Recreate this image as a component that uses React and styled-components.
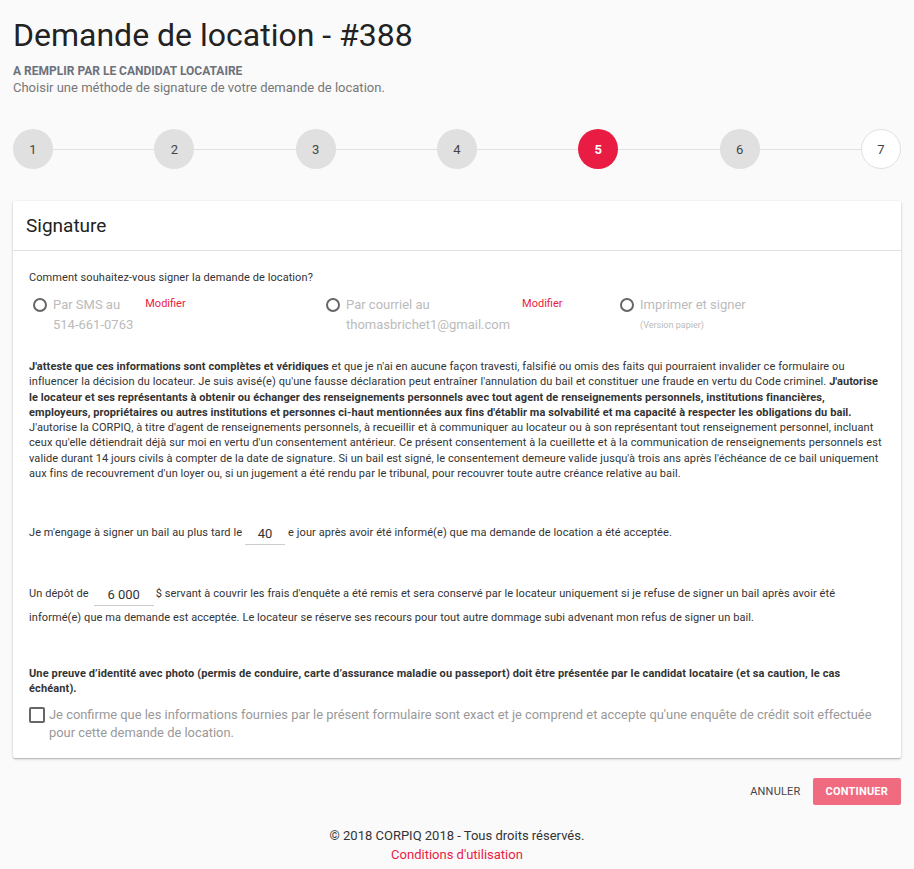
import React from "react";
import styled, { createGlobalStyle } from "styled-components";

const Global = createGlobalStyle`
  html, body { margin: 0; padding: 0; background: #fafafa; }
  body { font-family: Roboto, "Noto Sans", Arial, sans-serif; color: #333; }
  * { box-sizing: border-box; }
`;

const Page = styled.div`
  padding: 13px 13px 0 13px;
  min-height: 869px;
`;

const Title = styled.h1`
  margin: 4px 0 0 0;
  font-size: 32px;
  font-weight: 400;
  line-height: 36px;
  color: #222;
`;

const Kicker = styled.div`
  margin-top: 11px;
  font-size: 12px;
  font-weight: 700;
  line-height: 14px;
  color: #6c717b;
`;

const Lead = styled.div`
  margin-top: 1px;
  font-size: 13px;
  line-height: 17px;
  color: #777;
`;

const Stepper = styled.div`
  margin-top: 33px;
  display: flex;
  align-items: center;
`;

const Step = styled.div`
  flex: 0 0 40px;
  width: 40px;
  height: 40px;
  border-radius: 50%;
  display: flex;
  align-items: center;
  justify-content: center;
  font-size: 13px;
  font-weight: ${(p) => (p.$active ? 700 : 400)};
  color: ${(p) => (p.$active ? "#fff" : "#444")};
  background: ${(p) => (p.$active ? "#e91c43" : p.$future ? "#fff" : "#e0e0e0")};
  border: ${(p) => (p.$future ? "1px solid #e0e0e0" : "none")};
`;

const Connector = styled.div`
  flex: 1;
  height: 1px;
  background: #e0e0e0;
`;

const Card = styled.section`
  margin-top: 32px;
  background: #fff;
  box-shadow: 0 1px 3px rgba(0, 0, 0, 0.2), 0 1px 1px rgba(0, 0, 0, 0.14);
  border-radius: 2px;
`;

const CardHeader = styled.div`
  height: 50px;
  padding: 0 13px;
  display: flex;
  align-items: center;
  font-size: 19px;
  color: #222;
  border-bottom: 1px solid #e0e0e0;
`;

const CardBody = styled.div`
  padding: 19px 16px 16px 16px;
  font-size: 11px;
  line-height: 15.3px;
  letter-spacing: 0.08px;
  color: #333;
`;

const Question = styled.div`
  line-height: 15px;
`;

const Options = styled.div`
  margin-top: 10px;
  margin-left: 4px;
  display: grid;
  grid-template-columns: 293px 294px 293px;
  letter-spacing: 0;
`;

const Option = styled.div`
  display: flex;
  align-items: flex-start;
`;

const Radio = styled.span`
  flex: 0 0 14px;
  width: 14px;
  height: 14px;
  margin-top: 3px;
  border: 2px solid #666;
  border-radius: 50%;
`;

const OptionLabel = styled.div`
  margin-left: 6px;
  font-size: 13px;
  line-height: 20px;
  color: #bbb;
`;

const Small = styled.div`
  font-size: 9px;
  line-height: 20px;
  color: #bbb;
`;

const Modify = styled.span`
  margin-left: 12px;
  font-size: 11px;
  line-height: 20px;
  color: #e91c43;
  margin-top: -1px;
`;

const Legal = styled.p`
  margin: 24px 0 0 0;
  line-height: 15.3px;
`;

const InlinePara = styled.p`
  margin: ${(p) => p.$top}px 0 0 0;
  line-height: 23px;
`;

const Field = styled.span`
  display: inline-block;
  width: ${(p) => p.$w}px;
  height: 23px;
  margin: 0 ${(p) => p.$mr}px 0 ${(p) => p.$ml}px;
  border-bottom: 1px solid #ccc;
  text-align: center;
  font-size: 13px;
  line-height: 23px;
  letter-spacing: 0;
  color: #333;
  vertical-align: middle;
`;

const Notice = styled.p`
  margin: 37px 0 0 0;
  font-weight: 700;
  line-height: 15px;
  letter-spacing: 0.12px;
`;

const Confirm = styled.label`
  margin-top: 10px;
  display: flex;
  align-items: flex-start;
`;

const Box = styled.span`
  flex: 0 0 16px;
  width: 16px;
  height: 16px;
  margin-top: 1px;
  border: 2px solid #666;
  border-radius: 2px;
`;

const ConfirmText = styled.span`
  margin-left: 4px;
  font-size: 12.9px;
  line-height: 18px;
  letter-spacing: 0;
  color: #999;
`;

const Actions = styled.div`
  margin-top: 20px;
  display: flex;
  justify-content: flex-end;
  align-items: center;
  gap: 6px;
`;

const Button = styled.button`
  height: 27px;
  padding: 0 ${(p) => (p.$primary ? 13 : 6)}px;
  border: none;
  border-radius: 2px;
  font-family: Roboto, Arial, sans-serif;
  font-size: 11px;
  font-weight: ${(p) => (p.$primary ? 700 : 400)};
  color: ${(p) => (p.$primary ? "#fff" : "#444")};
  background: ${(p) => (p.$primary ? "#f06b80" : "transparent")};
  letter-spacing: 0.2px;
`;

const Footer = styled.footer`
  margin-top: 21px;
  text-align: center;
  font-size: 13px;
  line-height: 19px;
  color: #333;
`;

const FooterLink = styled.div`
  color: #e91c43;
`;

export default function App() {
  const steps = [1, 2, 3, 4, 5, 6, 7];
  return (
    <>
      <Global />
      <Page>
        <Title>Demande de location - #388</Title>
        <Kicker>A REMPLIR PAR LE CANDIDAT LOCATAIRE</Kicker>
        <Lead>Choisir une méthode de signature de votre demande de location.</Lead>

        <Stepper>
          {steps.map((n, i) => (
            <React.Fragment key={n}>
              {i > 0 && <Connector />}
              <Step $active={n === 5} $future={n === 7}>
                {n}
              </Step>
            </React.Fragment>
          ))}
        </Stepper>

        <Card>
          <CardHeader>Signature</CardHeader>
          <CardBody>
            <Question>Comment souhaitez-vous signer la demande de location?</Question>
            <Options>
              <Option>
                <Radio />
                <OptionLabel>
                  Par SMS au
                  <br />
                  514-661-0763
                </OptionLabel>
                <Modify>Modifier</Modify>
              </Option>
              <Option>
                <Radio />
                <OptionLabel>
                  Par courriel au
                  <br />
                  thomasbrichet1@gmail.com
                </OptionLabel>
                <Modify>Modifier</Modify>
              </Option>
              <Option>
                <Radio />
                <OptionLabel>
                  Imprimer et signer
                  <Small>(Version papier)</Small>
                </OptionLabel>
              </Option>
            </Options>

            <Legal>
              <b>J'atteste que ces informations sont complètes et véridiques</b> et que je n'ai en aucune façon
              travesti, falsifié ou omis des faits qui pourraient invalider ce formulaire ou influencer la décision
              du locateur. Je suis avisé(e) qu'une fausse déclaration peut entraîner l'annulation du bail et
              constituer une fraude en vertu du Code criminel.{" "}
              <b>
                J'autorise le locateur et ses représentants à obtenir ou échanger des renseignements personnels avec
                tout agent de renseignements personnels, institutions financières, employeurs, propriétaires ou
                autres institutions et personnes ci-haut mentionnées aux fins d'établir ma solvabilité et ma
                capacité à respecter les obligations du bail.
              </b>{" "}
              J'autorise la CORPIQ, à titre d'agent de renseignements personnels, à recueillir et à communiquer au
              locateur ou à son représentant tout renseignement personnel, incluant ceux qu'elle détiendrait déjà
              sur moi en vertu d'un consentement antérieur. Ce présent consentement à la cueillette et à la
              communication de renseignements personnels est valide durant 14 jours civils à compter de la date de
              signature. Si un bail est signé, le consentement demeure valide jusqu'à trois ans après l'échéance de
              ce bail uniquement aux fins de recouvrement d'un loyer ou, si un jugement a été rendu par le tribunal,
              pour recouvrer toute autre créance relative au bail.
            </Legal>

            <InlinePara $top={40}>
              Je m'engage à signer un bail au plus tard le
              <Field $w={40} $ml={3} $mr={3}>40</Field>
              e jour après avoir été informé(e) que ma demande de location a été acceptée.
            </InlinePara>

            <InlinePara $top={37}>
              Un dépôt de
              <Field $w={60} $ml={5} $mr={2}>6 000</Field>
              $ servant à couvrir les frais d'enquête a été remis et sera conservé par le locateur uniquement si je
              refuse de signer un bail après avoir été informé(e) que ma demande est acceptée. Le locateur se réserve
              ses recours pour tout autre dommage subi advenant mon refus de signer un bail.
            </InlinePara>

            <Notice>
              Une preuve d’identité avec photo (permis de conduire, carte d’assurance maladie ou passeport) doit être
              présentée par le candidat locataire (et sa caution, le cas échéant).
            </Notice>

            <Confirm>
              <Box />
              <ConfirmText>
                Je confirme que les informations fournies par le présent formulaire sont exact et je comprend et
                accepte qu'une enquête de crédit soit effectuée pour cette demande de location.
              </ConfirmText>
            </Confirm>
          </CardBody>
        </Card>

        <Actions>
          <Button>ANNULER</Button>
          <Button $primary>CONTINUER</Button>
        </Actions>

        <Footer>
          <div>© 2018 CORPIQ 2018 - Tous droits réservés.</div>
          <FooterLink>Conditions d'utilisation</FooterLink>
        </Footer>
      </Page>
    </>
  );
}
